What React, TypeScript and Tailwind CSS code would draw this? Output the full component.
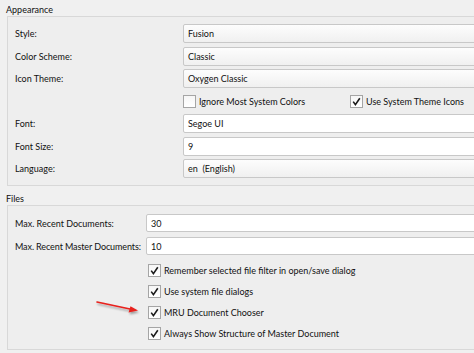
import React from 'react';

const Check = () => (
  <svg width="9" height="9" viewBox="0 0 9 9" className="block">
    <path d="M1.2 4.6 L3.4 7.6 L7.8 1.2" fill="none" stroke="#1a1a1a" strokeWidth="1.6" />
  </svg>
);

const CheckBox = ({ checked, label }: { checked: boolean; label: string }) => (
  <div className="flex items-center gap-[3px] h-full whitespace-nowrap">
    <div className="w-[13px] h-[13px] border border-[#a5a5a5] bg-gradient-to-b from-[#f6f6f6] to-[#ffffff] flex items-center justify-center">
      {checked && <Check />}
    </div>
    <span>{label}</span>
  </div>
);

const Field = ({ value, combo }: { value: string; combo?: boolean }) => (
  <div
    className={
      'h-full border border-[#c8c8c8] rounded-[2px] pl-[4px] flex items-center whitespace-pre ' +
      (combo ? 'bg-gradient-to-b from-[#fdfdfd] to-[#f0f0f0]' : 'bg-white')
    }
  >
    {value}
  </div>
);

const appearance: { label: string; value: string; combo?: boolean }[] = [
  { label: 'Style:', value: 'Fusion', combo: true },
  { label: 'Color Scheme:', value: 'Classic', combo: true },
  { label: 'Icon Theme:', value: 'Oxygen Classic', combo: true },
];

const appearance2: { label: string; value: string; combo?: boolean }[] = [
  { label: 'Font:', value: 'Segoe UI' },
  { label: 'Font Size:', value: '9' },
  { label: 'Language:', value: 'en  (English)', combo: true },
];

export default function App() {
  return (
    <div
      className="relative w-[474px] h-[353px] overflow-hidden bg-[#f0f0f0] text-[#111111] text-[9px] leading-none"
      style={{ fontFamily: 'Lato, "Noto Sans", sans-serif' }}
    >
      <div className="h-[16px] pl-[6px] pt-[5px]">Appearance</div>
      <div className="ml-[7px] w-[520px] border border-[#d8d8d8] bg-[#eeeeee] pl-[7px] pt-[7px] pb-[7px] flex flex-col gap-[3.5px]">
        {appearance.map((r) => (
          <div key={r.label} className="flex h-[19px]">
            <div className="w-[168px] flex items-center">{r.label}</div>
            <div className="flex-1">
              <Field value={r.value} combo={r.combo} />
            </div>
          </div>
        ))}
        <div className="flex h-[19px]">
          <div className="w-[168px]" />
          <div className="w-[167px]">
            <CheckBox checked={false} label="Ignore Most System Colors" />
          </div>
          <CheckBox checked label="Use System Theme Icons" />
        </div>
        {appearance2.map((r) => (
          <div key={r.label} className="flex h-[19px]">
            <div className="w-[168px] flex items-center">{r.label}</div>
            <div className="flex-1">
              <Field value={r.value} combo={r.combo} />
            </div>
          </div>
        ))}
      </div>

      <div className="h-[19px] pl-[6px] pt-[8px]">Files</div>
      <div className="ml-[7px] w-[520px] h-[145px] border border-[#d8d8d8] bg-[#eeeeee] pl-[7px] pt-[8px] flex flex-col">
        <div className="flex h-[18px]">
          <div className="w-[131px] shrink-0 flex items-center whitespace-nowrap">Max. Recent Documents:</div>
          <div className="flex-1">
            <Field value="30" />
          </div>
        </div>
        <div className="flex h-[18px] mt-[5px]">
          <div className="w-[131px] shrink-0 flex items-center whitespace-nowrap tracking-[-0.1px]">Max. Recent Master Documents:</div>
          <div className="flex-1">
            <Field value="10" />
          </div>
        </div>
        <div className="flex flex-col pl-[133px] mt-[5px]">
          <div className="h-[21px]">
            <CheckBox checked label="Remember selected file filter in open/save dialog" />
          </div>
          <div className="h-[21px]">
            <CheckBox checked label="Use system file dialogs" />
          </div>
          <div className="h-[21px]">
            <CheckBox checked label="MRU Document Chooser" />
          </div>
          <div className="h-[21px]">
            <CheckBox checked label="Always Show Structure of Master Document" />
          </div>
        </div>
      </div>

      <svg className="absolute left-[94px] top-[296px]" width="50" height="22" viewBox="0 0 50 22">
        <defs>
          <filter id="sh" x="-20%" y="-50%" width="140%" height="200%">
            <feGaussianBlur in="SourceAlpha" stdDeviation="1" />
            <feOffset dx="1" dy="2" />
            <feComponentTransfer>
              <feFuncA type="linear" slope="0.35" />
            </feComponentTransfer>
            <feMerge>
              <feMergeNode />
              <feMergeNode in="SourceGraphic" />
            </feMerge>
          </filter>
        </defs>
        <g filter="url(#sh)">
          <path d="M3 6 L36 13" stroke="#e8201c" strokeWidth="1.6" strokeLinecap="round" />
          <path d="M44 14.6 L34.5 16.6 L36.5 10.2 Z" fill="#e8201c" />
        </g>
      </svg>
    </div>
  );
}
